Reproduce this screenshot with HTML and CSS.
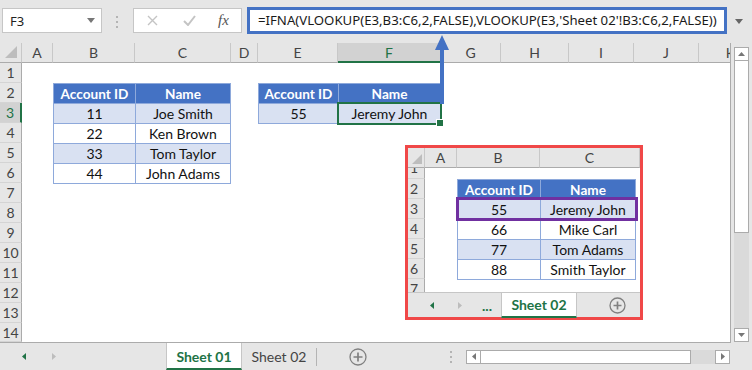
FILE: index.html
```html
<!DOCTYPE html>
<html lang="en">
<head>
    <meta charset="UTF-8">
    <title>IFNA VLOOKUP</title>
    <link rel="stylesheet" href="styles.css">
</head>
<body>
    <div class="toolbar">
        <div class="namebox"><span>F3</span><i class="caret"></i></div>
        <svg class="grip" width="3" height="12"><rect x="0" y="0" width="2" height="2"/><rect x="0" y="5" width="2" height="2"/><rect x="0" y="10" width="2" height="2"/></svg>
        <div class="fxbox">
            <svg class="cancel" width="11" height="11"><path d="M1 1 L10 10 M10 1 L1 10"/></svg>
            <svg class="enter" width="13" height="11"><path d="M1 6 L5 10 L12 1"/></svg>
            <span class="fx">fx</span>
        </div>
        <div class="formula">=IFNA(VLOOKUP(E3,B3:C6,2,FALSE),VLOOKUP(E3,'Sheet 02'!B3:C6,2,FALSE))</div>
        <svg class="fdrop" width="8" height="5"><polygon points="0,0 8,0 4,5"/></svg>
    </div>

    <div class="main">
        <div class="sheet">
            <div class="ch corner"><i class="tri"></i></div>
            <div class="ch">A</div>
            <div class="ch">B</div>
            <div class="ch">C</div>
            <div class="ch">D</div>
            <div class="ch">E</div>
            <div class="ch sel">F</div>
            <div class="ch">G</div>
            <div class="ch">H</div>
            <div class="ch">I</div>
            <div class="ch">J</div>
            <div class="ch">K</div>
            <div class="rh">1</div>
            <div class="rh">2</div>
            <div class="rh sel">3</div>
            <div class="rh">4</div>
            <div class="rh">5</div>
            <div class="rh">6</div>
            <div class="rh">7</div>
            <div class="rh">8</div>
            <div class="rh">9</div>
            <div class="rh">10</div>
            <div class="rh">11</div>
            <div class="rh">12</div>
            <div class="rh">13</div>
            <div class="rh">14</div>

            <div class="area tb1">
                <table class="xl">
                    <colgroup><col style="width:82px"><col></colgroup>
                    <tr><th>Account ID</th><th>Name</th></tr>
                    <tr class="alt"><td>11</td><td>Joe Smith</td></tr>
                    <tr><td>22</td><td>Ken Brown</td></tr>
                    <tr class="alt"><td>33</td><td>Tom Taylor</td></tr>
                    <tr><td>44</td><td>John Adams</td></tr>
                </table>
            </div>

            <div class="area tb2">
                <table class="xl">
                    <colgroup><col style="width:80px"><col></colgroup>
                    <tr><th>Account ID</th><th>Name</th></tr>
                    <tr class="alt"><td>55</td><td class="active">Jeremy John</td></tr>
                </table>
            </div>
        </div>

        <div class="vscroll">
            <div class="sbtn"><svg width="7" height="4"><polygon points="0,4 7,4 3.5,0"/></svg></div>
            <div class="vthumb"></div>
            <div class="vtrack"></div>
            <div class="sbtn"><svg width="7" height="4"><polygon points="0,0 7,0 3.5,4"/></svg></div>
        </div>
    </div>

    <div class="tabbar">
        <div class="tabnav">
            <svg width="4" height="7"><polygon class="on" points="4,0 4,7 0,3.5"/></svg>
            <svg width="4" height="7"><polygon class="off" points="0,0 0,7 4,3.5"/></svg>
        </div>
        <div class="tab current">Sheet 01</div>
        <div class="tab">Sheet 02</div>
        <i class="tabsep"></i>
        <svg class="plus" width="18" height="18"><circle cx="9" cy="9" r="8"/><path d="M9 4.5 V13.5 M4.5 9 H13.5"/></svg>
        <svg class="grip hgrip" width="3" height="12"><rect x="0" y="0" width="2" height="2"/><rect x="0" y="5" width="2" height="2"/><rect x="0" y="10" width="2" height="2"/></svg>
        <div class="hscroll">
            <div class="sbtn"><svg width="4" height="7"><polygon points="4,0 4,7 0,3.5"/></svg></div>
            <div class="hthumb"></div>
            <div class="htrack"></div>
            <div class="sbtn"><svg width="4" height="7"><polygon points="0,0 0,7 4,3.5"/></svg></div>
        </div>
    </div>

    <!-- pasted picture of Sheet 02 -->
    <div class="inset">
        <div class="igrid">
            <div class="ich corner"><i class="tri small"></i></div>
            <div class="ich">A</div>
            <div class="ich">B</div>
            <div class="ich">C</div>
            <div class="irh cut-top">1</div>
            <div class="irh">2</div>
            <div class="irh">3</div>
            <div class="irh">4</div>
            <div class="irh">5</div>
            <div class="irh">6</div>
            <div class="irh cut-bottom">7</div>
            <div class="area itb">
                <table class="xl">
                    <colgroup><col style="width:83px"><col></colgroup>
                    <tr><th>Account ID</th><th>Name</th></tr>
                    <tr class="alt"><td>55</td><td>Jeremy John</td></tr>
                    <tr><td>66</td><td>Mike Carl</td></tr>
                    <tr class="alt"><td>77</td><td>Tom Adams</td></tr>
                    <tr><td>88</td><td>Smith Taylor</td></tr>
                </table>
            </div>
        </div>
        <div class="itabs">
            <div class="tabnav inav">
                <svg width="4" height="7"><polygon class="on" points="4,0 4,7 0,3.5"/></svg>
                <svg width="4" height="7"><polygon class="off" points="0,0 0,7 4,3.5"/></svg>
            </div>
            <span class="more">...</span>
            <div class="tab current itab">Sheet 02</div>
            <svg class="plus iplus" width="17" height="17"><circle cx="8.5" cy="8.5" r="7.5"/><path d="M8.5 4.5 V12.5 M4.5 8.5 H12.5"/></svg>
        </div>
        <div class="hilite"></div>
    </div>

    <svg class="arrow" width="16" height="70"><polygon points="1,16 8,1 15,16"/><rect x="6" y="15" width="4" height="55"/></svg>
</body>
</html>
```

FILE: styles.css
```css
* { box-sizing: border-box; }

body {
    margin: 0;
    width: 752px;
    height: 370px;
    overflow: hidden;
    position: relative;
    background: #e6e6e6;
    font-family: "Lato", sans-serif;
}

/* formula bar */
.toolbar {
    height: 43px;
    display: flex;
    align-items: flex-start;
    padding-top: 7px;
}
.namebox {
    margin: 1px 0 0 2px;
    width: 100px;
    height: 25px;
    background: #fff;
    border: 1px solid #c6c6c6;
    display: flex;
    align-items: center;
    justify-content: space-between;
    padding: 0 6px 0 7px;
    font-family: "Noto Sans", sans-serif;
    font-size: 13px;
    color: #222;
}
.caret {
    border-left: 4px solid transparent;
    border-right: 4px solid transparent;
    border-top: 5px solid #777;
}
.grip { margin: 9px 0 0 14px; fill: #b4b4b4; }
.fxbox {
    margin: 1px 0 0 14px;
    width: 109px;
    height: 25px;
    background: #fff;
    border: 1px solid #c6c6c6;
    display: flex;
    align-items: center;
    padding-left: 13px;
}
.fxbox svg { fill: none; stroke: #c4c4c4; }
.cancel { stroke-width: 1.4; }
.enter { margin-left: 25px; stroke-width: 2; }
.fx {
    margin-left: 22px;
    font-family: "Liberation Serif", serif;
    font-style: italic;
    font-size: 15px;
    color: #555;
}
.formula {
    margin-left: 5px;
    width: 480px;
    height: 27px;
    background: #fff;
    border: 3px solid #4472c4;
    padding-left: 8px;
    font-family: "Noto Sans", sans-serif;
    font-size: 13.2px;
    line-height: 21px;
    color: #1a1a1a;
    white-space: nowrap;
    overflow: hidden;
}
.fdrop { margin: 12px 0 0 8px; fill: #666; }

/* worksheet */
.main { display: flex; height: 300px; }
.sheet {
    width: 731px;
    flex: none;
    overflow: hidden;
    display: grid;
    grid-template-columns: 22px 31px 82px 96px 27px 80px 103px 60px 68px 65px 65px 64px;
    grid-template-rows: repeat(14, 20px) 19px;
    background: #fff;
    border-right: 1px solid #ababab;
    border-bottom: 1px solid #ababab;
}
.ch, .rh, .ich, .irh {
    background: #e6e6e6;
    color: #444;
    font-size: 14px;
    display: flex;
    align-items: center;
    justify-content: center;
}
.ch { border-right: 1px solid #c8c8c8; border-bottom: 1px solid #ababab; }
.rh { grid-column: 1; border-right: 1px solid #ababab; border-bottom: 1px solid #d4d4d4; }
.ch.sel { background: #d2d2d2; color: #217346; border-bottom: 2px solid #217346; }
.rh.sel { background: #d2d2d2; color: #217346; border-right: 2px solid #217346; }
.corner { justify-content: flex-end; align-items: flex-end; padding: 0 4px 4px 0; }
.tri {
    border-left: 12px solid transparent;
    border-bottom: 12px solid #bdbdbd;
}
.tri.small { border-left-width: 10px; border-bottom-width: 10px; }

.tb1 { grid-column: 3 / 5; grid-row: 3 / 8; }
.tb2 { grid-column: 6 / 8; grid-row: 3 / 5; }

.xl {
    width: 100%;
    height: 100%;
    border-collapse: collapse;
    table-layout: fixed;
    font-size: 14px;
}
.xl th, .xl td {
    border: 1px solid #8ea9db;
    text-align: center;
    padding: 0;
    height: 20px;
    color: #111;
}
.xl th { background: #4472c4; color: #fff; font-weight: 700; font-size: 13.6px; }
.xl .alt td { background: #d9e1f2; }
.xl td.active { position: relative; }
.xl td.active::after {
    content: "";
    position: absolute;
    left: -2px; top: -2px; right: -2px; bottom: -2px;
    border: 2px solid #217346;
}
.xl td.active::before {
    content: "";
    position: absolute;
    right: -4px; bottom: -4px;
    width: 6px; height: 6px;
    background: #217346;
    border: 1px solid #fff;
    z-index: 1;
}

/* scrollbars */
.vscroll {
    width: 21px;
    padding: 4px 0 0 3px;
    display: flex;
    flex-direction: column;
}
.sbtn {
    background: #fff;
    border: 1px solid #ababab;
    display: flex;
    align-items: center;
    justify-content: center;
    fill: #777;
}
.vscroll .sbtn { width: 15px; height: 14px; }
.vthumb { width: 15px; height: 172px; background: #fff; border: 1px solid #ababab; border-top: 0; }
.vtrack { width: 15px; height: 95px; background: #dadada; }

.tabbar {
    height: 27px;
    display: flex;
    align-items: center;
}
.tabnav {
    width: 166px;
    display: flex;
    gap: 26px;
    padding-left: 22px;
    align-self: center;
}
.on { fill: #217346; }
.off { fill: #bdbdbd; }
.tab {
    height: 27px;
    width: 74px;
    display: flex;
    align-items: center;
    justify-content: center;
    font-size: 14px;
    color: #444;
}
.tab.current {
    width: 76px;
    background: #fff;
    border-left: 1px solid #c6c6c6;
    border-right: 1px solid #c6c6c6;
    border-bottom: 2px solid #217346;
    color: #217346;
    font-weight: 700;
    padding-top: 1px;
}
.tabsep { width: 1px; height: 18px; background: #b4b4b4; }
.plus { margin-left: 32px; fill: none; stroke: #808080; stroke-width: 1.3; }
.plus path { stroke-width: 1.7; }
.hgrip { margin: 0 0 0 83px; }
.hscroll {
    margin-left: 13px;
    width: 264px;
    height: 14px;
    display: flex;
}
.hscroll .sbtn { width: 15px; height: 14px; }
.hthumb { width: 210px; background: #fff; border: 1px solid #ababab; border-left: 0; }
.htrack { width: 24px; background: #dadada; }

/* pasted picture */
.inset {
    position: absolute;
    left: 405px;
    top: 145px;
    width: 238px;
    height: 175px;
    border: 3px solid #f04848;
    background: #fff;
    display: flex;
    flex-direction: column;
}
.igrid {
    display: grid;
    grid-template-columns: 17px 32px 83px 100px;
    grid-template-rows: 20px 11px 20px 20px 20px 20px 20px 13px;
}
.ich { border-right: 1px solid #c8c8c8; border-bottom: 1px solid #ababab; }
.ich:last-of-type { border-right: 0; }
.irh {
    grid-column: 1;
    justify-content: flex-start;
    padding-left: 2px;
    border-right: 1px solid #ababab;
    border-bottom: 1px solid #d4d4d4;
    overflow: hidden;
    line-height: 20px;
}
.irh.cut-top { align-items: flex-end; }
.irh.cut-bottom { align-items: flex-start; border-bottom: 0; }
.corner.ich { padding: 0 2px 3px 0; }
.itb { grid-column: 3 / 5; grid-row: 3 / 8; width: 179px; }
.itabs {
    height: 25px;
    display: flex;
    align-items: center;
    border-top: 1px solid #c6c6c6;
    background: #e6e6e6;
}
.inav { width: 74px; padding-left: 22px; gap: 24px; }
.more { width: 19px; color: #217346; font-weight: 700; font-size: 14px; }
.itab { height: 25px; }
.iplus { margin-left: 32px; }
.hilite {
    position: absolute;
    left: 48px;
    top: 49px;
    width: 182px;
    height: 24px;
    border: 3px solid #7030a0;
}

.arrow {
    position: absolute;
    left: 434px;
    top: 34px;
    fill: #4472c4;
}
```
